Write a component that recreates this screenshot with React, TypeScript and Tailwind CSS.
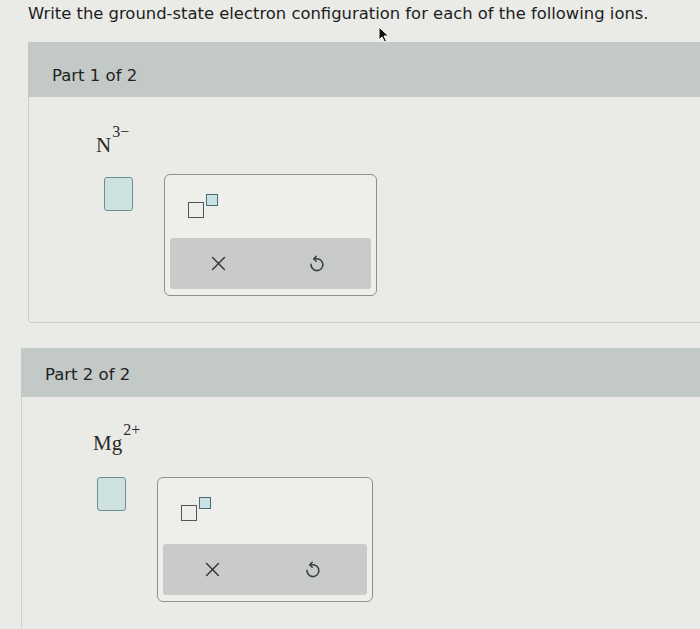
import React from 'react'

const sans = { fontFamily: '"DejaVu Sans", Verdana, sans-serif' }
const serif = { fontFamily: '"Liberation Serif", "Times New Roman", serif' }

function UndoIcon() {
  return (
    <svg width="19" height="19" viewBox="0 0 16 16" fill="none" stroke="#3a3f40" strokeWidth="1.3" strokeLinecap="round" strokeLinejoin="round">
      <path d="M5.8 4 H8.3 A5 5 0 1 1 3.4 8.6" />
      <path d="M7.8 1.9 L5.7 4 L7.8 6.1" />
    </svg>
  )
}

function CloseIcon() {
  return (
    <svg width="15" height="15" viewBox="0 0 14 14" stroke="#333" strokeWidth="1.3" strokeLinecap="round">
      <path d="M1.5 1.5 L12.5 12.5 M12.5 1.5 L1.5 12.5" />
    </svg>
  )
}

function Palette({ size }: { size: string }) {
  return (
    <div className={`${size} rounded-[6px] border border-[#8e8f8f] bg-[#eeeeeb] flex flex-col`}>
      <div className="flex-1 pl-[23px] pt-[19px]">
        <div className="flex items-start">
          <div className="mt-[8px] w-[16px] h-[16px] border-[1.5px] border-[#555]" />
          <div className="ml-[2px] w-[12px] h-[12px] border-[1.5px] border-[#4c6b70] bg-[#c7e3e6]" />
        </div>
      </div>
      <div className="mx-[5px] mb-[6px] h-[51px] rounded-[3px] bg-[#c8cbca] flex items-center">
        <div className="flex-1 flex justify-center pr-[2px]"><CloseIcon /></div>
        <div className="flex-1 flex justify-center pr-[6px]"><UndoIcon /></div>
      </div>
    </div>
  )
}

interface PartProps {
  n: number
  ion: string
  sup: string
  left: number
  header: string
  bodyH: string
  ionPad: string
  rowMt: string
  boxMt: string
  palette: string
}

function Part({ n, ion, sup, left, header, bodyH, ionPad, rowMt, boxMt, palette }: PartProps) {
  return (
    <div style={{ marginLeft: left }}>
      <div className={`${header} bg-[#c2c9c6] flex items-center pl-[24px] text-[16.5px] text-[#222]`} style={sans}>
        Part {n} of 2
      </div>
      <div className={`${bodyH} border-l border-b border-[#cfd0cd] rounded-bl-[4px]`}>
        <div className={`${ionPad} text-[21px] leading-[24px] text-[#2a2a2a]`} style={serif}>
          {ion}
          <span className="inline-block align-top relative top-[-9px] ml-[1px] text-[16px] leading-[16px]">{sup}</span>
        </div>
        <div className={`flex items-start ${rowMt}`}>
          <div className={`ml-[75px] ${boxMt} w-[29px] h-[34px] rounded-[3px] border-[1.5px] border-[#6d8f91] bg-[#cde1e1]`} />
          <div className="ml-[31px]">
            <Palette size={palette} />
          </div>
        </div>
      </div>
    </div>
  )
}

export default function App() {
  return (
    <div className="relative w-[700px] h-[629px] overflow-hidden bg-[#eaeae7]">
      <div className="pt-[4px] pl-[28px] text-[16.4px] leading-[20px] text-[#1e1e1e] whitespace-nowrap" style={sans}>
        Write the ground-state electron configuration for each of the following ions.
      </div>

      <div className="mt-[18px]">
        <Part n={1} ion="N" sup="3−" left={28} header="h-[55px] pt-[13px]" bodyH="h-[226px]" ionPad="pl-[67px] pt-[36px]" rowMt="mt-[17px]" boxMt="mt-[3px]" palette="w-[213px] h-[122px]" />
      </div>

      <div className="mt-[25px]">
        <Part n={2} ion="Mg" sup="2+" left={21} header="h-[49px] pt-[6px]" bodyH="h-[240px]" ionPad="pl-[71px] pt-[34px]" rowMt="mt-[22px]" boxMt="mt-[0px]" palette="w-[216px] h-[125px]" />
      </div>

      {/* mouse pointer */}
      <svg className="absolute left-[377px] top-[26px]" width="14" height="18" viewBox="0 0 14 18">
        <path d="M2 1 L2 14 L5 11 L7.5 16 L9.5 15 L7 10 L11.5 10 Z" fill="#111" stroke="#fff" strokeWidth="1" />
      </svg>
    </div>
  )
}
